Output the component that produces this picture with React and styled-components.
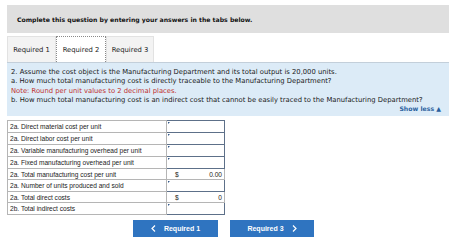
import React from "react";
import styled, { createGlobalStyle } from "styled-components";

const Global = createGlobalStyle`
  html, body { margin: 0; padding: 0; background: #fff; }
  body { font-family: "DejaVu Sans", Verdana, sans-serif; }
`;

const Page = styled.div`
  width: 442px;
  padding: 5px 0 0 7px;
`;

const Header = styled.div`
  background: #dfdfdf;
  height: 28px;
  display: flex;
  align-items: center;
  padding-left: 10px;
  font-weight: bold;
  font-size: 6.15px;
  color: #111;
`;

const Tabs = styled.div`
  display: flex;
  margin-top: 3px;
  height: 26px;
`;

const Tab = styled.div`
  width: ${(p) => p.$w}px;
  box-sizing: border-box;
  display: flex;
  align-items: center;
  justify-content: center;
  font-size: 6.8px;
  color: #222;
  background: ${(p) => (p.$active ? "#fff" : "#f3f3f3")};
  border: 1px ${(p) => (p.$active ? "dotted #8a8a8a" : "solid #e2e2e2")};
  border-bottom: none;
`;

const Panel = styled.div`
  background: #dcebf7;
  border-top: 1px solid #c3cfda;
  box-sizing: border-box;
  height: 54px;
  padding: 5px 4px 0 4px;
  font-size: 6.8px;
  line-height: 9.3px;
  color: #1a1a1a;
`;

const Note = styled.div`
  color: #c0312d;
`;

const ShowLess = styled.div`
  text-align: right;
  font-weight: bold;
  color: #2a5f9e;
  font-size: 6.2px;
  margin-top: -1px;
  padding-right: 4px;
`;

const Table = styled.table`
  margin-top: 4px;
  border-collapse: collapse;
  width: 218px;
  font-family: "Liberation Sans", Arial, sans-serif;
  font-size: 6.6px;
  color: #222;
`;

const Label = styled.td`
  width: 159px;
  height: 11px;
  padding: 0 0 0 2px;
  border: 1px solid #b5b5b5;
  box-sizing: border-box;
`;

const InputCell = styled.td`
  position: relative;
  width: 57px;
  height: 11px;
  padding: 0;
  border: 1.5px solid #5d7089;
  background: #fff;
  &::before {
    content: "";
    position: absolute;
    left: 1px;
    top: 1px;
    border-left: 2px solid #34598a;
    border-bottom: 2px solid transparent;
  }
`;

const ValueCell = styled.td`
  width: 57px;
  height: 11px;
  padding: 0 2px 0 8px;
  border: 1px solid #b5b5b5;
  box-sizing: border-box;
`;

const ValueRow = styled.div`
  display: flex;
  justify-content: space-between;
`;

const Buttons = styled.div`
  display: flex;
  gap: 12px;
  padding-left: 126px;
  margin-top: 5px;
`;

const NavButton = styled.div`
  width: ${(p) => p.$w}px;
  height: 17px;
  background: #2f74c0;
  color: #fff;
  font-family: "Liberation Sans", Arial, sans-serif;
  font-weight: bold;
  font-size: 7px;
  display: flex;
  align-items: center;
  justify-content: center;
  gap: 8px;
`;

const Chevron = ({ dir }) => (
  <svg width="5" height="7" viewBox="0 0 5 7">
    <path
      d={dir === "left" ? "M4 0.5 L1 3.5 L4 6.5" : "M1 0.5 L4 3.5 L1 6.5"}
      fill="none"
      stroke="#fff"
      strokeWidth="1.2"
    />
  </svg>
);

const rows = [
  ["2a. Direct material cost per unit", null],
  ["2a. Direct labor cost per unit", null],
  ["2a. Variable manufacturing overhead per unit", null],
  ["2a. Fixed manufacturing overhead per unit", null],
  ["2a. Total manufacturing cost per unit", "0.00"],
  ["2a. Number of units produced and sold", null],
  ["2a. Total direct costs", "0"],
  ["2b. Total indirect costs", null],
];

export default function App() {
  return (
    <Page>
      <Global />
      <Header>Complete this question by entering your answers in the tabs below.</Header>
      <Tabs>
        <Tab $w={49}>Required 1</Tab>
        <Tab $w={50} $active>Required 2</Tab>
        <Tab $w={48}>Required 3</Tab>
      </Tabs>
      <Panel>
        <div>2. Assume the cost object is the Manufacturing Department and its total output is 20,000 units.</div>
        <div>a. How much total manufacturing cost is directly traceable to the Manufacturing Department?</div>
        <Note>Note: Round per unit values to 2 decimal places.</Note>
        <div>b. How much total manufacturing cost is an indirect cost that cannot be easily traced to the Manufacturing Department?</div>
        <ShowLess>Show less ▲</ShowLess>
      </Panel>
      <Table>
        <tbody>
          {rows.map(([label, val]) => (
            <tr key={label}>
              <Label>{label}</Label>
              {val === null ? (
                <InputCell />
              ) : (
                <ValueCell>
                  <ValueRow>
                    <span>$</span>
                    <span>{val}</span>
                  </ValueRow>
                </ValueCell>
              )}
            </tr>
          ))}
        </tbody>
      </Table>
      <Buttons>
        <NavButton $w={85}>
          <Chevron dir="left" />
          <span>Required 1</span>
        </NavButton>
        <NavButton $w={84}>
          <span>Required 3</span>
          <Chevron dir="right" />
        </NavButton>
      </Buttons>
    </Page>
  );
}
